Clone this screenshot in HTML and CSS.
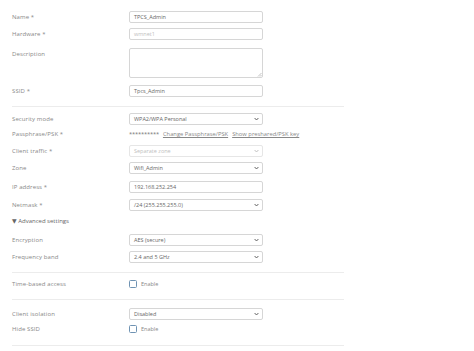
FILE: index.html
```html
<!DOCTYPE html>
<html>
<head>
  <meta charset="UTF-8">
  <title>Wireless network</title>
  <link rel="stylesheet" href="styles.css">
</head>
<body>
  <form class="wifi-form">
    <!-- General -->
    <section class="group group-first">
      <div class="row mb5">
        <label>Name *</label>
        <div class="field">TPCS_Admin</div>
      </div>
      <div class="row mb8">
        <label>Hardware *</label>
        <div class="field placeholder">wmnet1</div>
      </div>
      <div class="row row-top mb7">
        <label>Description</label>
        <div class="field textarea">
          <svg class="grip" width="5" height="5" viewBox="0 0 5 5"><path d="M4.5 1 L1 4.5 M4.5 3 L3 4.5" stroke="#aaa" stroke-width="0.7"/></svg>
        </div>
      </div>
      <div class="row">
        <label>SSID *</label>
        <div class="field">Tpcs_Admin</div>
      </div>
    </section>

    <!-- Security -->
    <section class="group group-security">
      <div class="row mb4">
        <label>Security mode</label>
        <div class="field select"><span>WPA2/WPA Personal</span><svg width="5" height="4" viewBox="0 0 5 4"><path d="M0.6 1 L2.5 3 L4.4 1" fill="none" stroke="#555" stroke-width="0.9"/></svg></div>
      </div>
      <div class="row row-text mb6">
        <label>Passphrase/PSK *</label>
        <div class="psk">
          <span class="stars">**********</span>
          <a href="#">Change Passphrase/PSK</a>
          <a href="#">Show preshared/PSK key</a>
        </div>
      </div>
      <div class="row mb5">
        <label>Client traffic *</label>
        <div class="field select disabled"><span>Separate zone</span><svg width="5" height="4" viewBox="0 0 5 4"><path d="M0.6 1 L2.5 3 L4.4 1" fill="none" stroke="#bbb" stroke-width="0.9"/></svg></div>
      </div>
      <div class="row mb7">
        <label>Zone</label>
        <div class="field select"><span>Wifi_Admin</span><svg width="5" height="4" viewBox="0 0 5 4"><path d="M0.6 1 L2.5 3 L4.4 1" fill="none" stroke="#555" stroke-width="0.9"/></svg></div>
      </div>
      <div class="row mb6">
        <label>IP address *</label>
        <div class="field">192.168.252.254</div>
      </div>
      <div class="row mb5">
        <label>Netmask *</label>
        <div class="field select"><span>/24 (255.255.255.0)</span><svg width="5" height="4" viewBox="0 0 5 4"><path d="M0.6 1 L2.5 3 L4.4 1" fill="none" stroke="#555" stroke-width="0.9"/></svg></div>
      </div>
      <div class="advanced mb8">&#9660; Advanced settings</div>
      <div class="row mb5">
        <label>Encryption</label>
        <div class="field select"><span>AES (secure)</span><svg width="5" height="4" viewBox="0 0 5 4"><path d="M0.6 1 L2.5 3 L4.4 1" fill="none" stroke="#555" stroke-width="0.9"/></svg></div>
      </div>
      <div class="row">
        <label>Frequency band</label>
        <div class="field select"><span>2.4 and 5 GHz</span><svg width="5" height="4" viewBox="0 0 5 4"><path d="M0.6 1 L2.5 3 L4.4 1" fill="none" stroke="#555" stroke-width="0.9"/></svg></div>
      </div>
    </section>

    <!-- Time-based access -->
    <section class="group group-time">
      <div class="row">
        <label>Time-based access</label>
        <div class="check"><span class="box"></span>Enable</div>
      </div>
    </section>

    <!-- Client options -->
    <section class="group group-client">
      <div class="row mb4">
        <label>Client isolation</label>
        <div class="field select"><span>Disabled</span><svg width="5" height="4" viewBox="0 0 5 4"><path d="M0.6 1 L2.5 3 L4.4 1" fill="none" stroke="#555" stroke-width="0.9"/></svg></div>
      </div>
      <div class="row row-text">
        <label>Hide SSID</label>
        <div class="check"><span class="box"></span>Enable</div>
      </div>
    </section>
    <div class="group-end"></div>
  </form>
</body>
</html>
```

FILE: styles.css
```css
* {
  margin: 0;
  padding: 0;
  box-sizing: border-box;
}
body {
  font-family: 'Open Sans', 'DejaVu Sans', sans-serif;
  font-size: 6px;
  color: #888;
  background: #ffffff;
  padding-left: 12px;
}
.wifi-form {
  width: 332px;
}
.group {
  border-top: 1px solid #ececec;
}
.group-first {
  border-top: none;
  padding: 11px 0 9px;
}
.group-security {
  padding: 6px 0 9px;
}
.group-time {
  padding: 5px 0 9px;
}
.group-client {
  padding: 8px 0 11px;
}
.group-end {
  border-top: 1px solid #ececec;
}
.row {
  display: grid;
  grid-template-columns: 117px 134px;
  align-items: center;
  height: 12px;
}
.row label {
  line-height: 8px;
  white-space: nowrap;
  letter-spacing: 0.1px;
}
.row-top {
  align-items: start;
  height: auto;
}
.row-top label {
  padding-top: 2px;
}
.row-text {
  height: 10px;
}
.mb4 { margin-bottom: 4px; }
.mb5 { margin-bottom: 5px; }
.mb6 { margin-bottom: 6px; }
.mb7 { margin-bottom: 7px; }
.mb8 { margin-bottom: 8px; }
.field {
  height: 12px;
  border: 1px solid #d6d6d6;
  border-radius: 2px;
  padding: 0 4px;
  font-size: 5.5px;
  line-height: 10px;
  color: #666;
  background: #fff;
  white-space: nowrap;
}
.placeholder {
  color: #c0c0c0;
}
.textarea {
  height: 30px;
  position: relative;
}
.grip {
  position: absolute;
  right: 0;
  bottom: 0;
}
.select {
  display: flex;
  justify-content: space-between;
  align-items: center;
  padding-right: 3px;
}
.disabled {
  color: #c0c0c0;
  border-color: #e6e6e6;
}
.psk {
  display: flex;
  gap: 4px;
  white-space: nowrap;
  font-size: 5.8px;
  color: #777;
}
.stars {
  letter-spacing: -0.2px;
}
.psk a {
  color: #888;
  text-decoration: underline;
}
.advanced {
  height: 10px;
  line-height: 10px;
  color: #666;
  font-weight: normal;
}
.check {
  display: flex;
  align-items: center;
  gap: 4px;
  font-size: 5.5px;
  color: #888;
}
.box {
  width: 8px;
  height: 8px;
  border: 1px solid #6f93b3;
  border-radius: 1.5px;
}
```
